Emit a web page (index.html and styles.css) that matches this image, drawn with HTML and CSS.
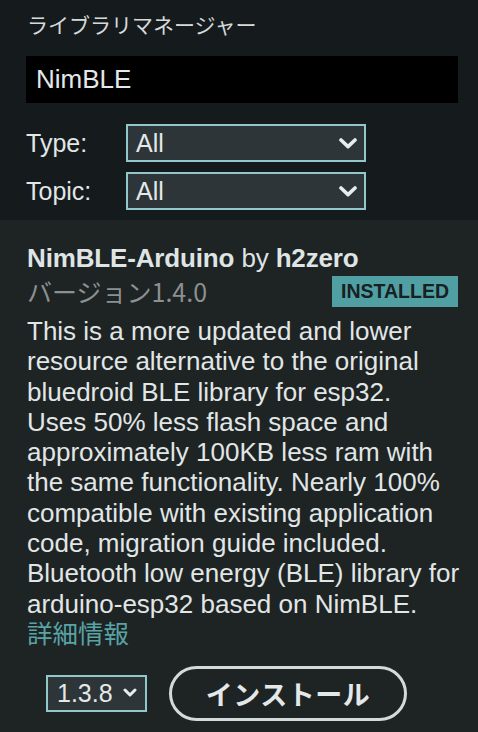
FILE: index.html
```html
<!DOCTYPE html>
<html>
<head>
<meta charset="utf-8">
<link rel="stylesheet" href="styles.css">
</head>
<body>
<div class="top">
  <div class="title">ライブラリマネージャー</div>
  <div class="search">NimBLE</div>
  <div class="filters">
    <div class="frow">
      <span class="flabel">Type:</span>
      <div class="select"><span>All</span><svg class="chev" viewBox="0 0 18 11" width="18" height="11"><path d="M2 2 L9 8.6 L16 2" fill="none" stroke="#e8ecec" stroke-width="3.6" stroke-linecap="round" stroke-linejoin="round"/></svg></div>
    </div>
    <div class="frow">
      <span class="flabel">Topic:</span>
      <div class="select"><span>All</span><svg class="chev" viewBox="0 0 18 11" width="18" height="11"><path d="M2 2 L9 8.6 L16 2" fill="none" stroke="#e8ecec" stroke-width="3.6" stroke-linecap="round" stroke-linejoin="round"/></svg></div>
    </div>
  </div>
</div>
<div class="item">
  <div class="name"><b>NimBLE-Arduino</b> by <b>h2zero</b></div>
  <div class="verrow">
    <span class="ver">バージョン1.4.0</span>
    <span class="badge">INSTALLED</span>
  </div>
  <p class="desc">This is a more updated and lower<br>resource alternative to the original<br>bluedroid BLE library for esp32.<br>Uses 50% less flash space and<br>approximately 100KB less ram with<br>the same functionality. Nearly 100%<br>compatible with existing application<br>code, migration guide included.<br>Bluetooth low energy (BLE) library for<br>arduino-esp32 based on NimBLE.</p>
  <a class="more">詳細情報</a>
  <div class="actions">
    <div class="vsel"><span>1.3.8</span><svg viewBox="0 0 14 10" width="14" height="10"><path d="M2 2 L7 7 L12 2" fill="none" stroke="#e8ecec" stroke-width="3" stroke-linecap="round" stroke-linejoin="round"/></svg></div>
    <button class="install">インストール</button>
  </div>
</div>
</body>
</html>
```
FILE: styles.css
```css
html, body {
  margin: 0;
  padding: 0;
  background: #1e2324;
  font-family: "Liberation Sans", Arial, "Noto Sans CJK JP", sans-serif;
  color: #e1e6e6;
}
.top {
  background: #151a1d;
  height: 220px;
  box-sizing: border-box;
  padding: 8px 20px 0 26px;
}
.title {
  font-family: "Noto Sans CJK JP", sans-serif;
  font-size: 21px;
  color: #d5d9d9;
  height: 32px;
  line-height: 32px;
  padding-left: 1px;
}
.search {
  margin-top: 16px;
  width: 432px;
  height: 47px;
  background: #000;
  box-sizing: border-box;
  padding-left: 10px;
  font-size: 26px;
  line-height: 47px;
  color: #e4e8e8;
}
.filters {
  margin-top: 21px;
  display: flex;
  flex-direction: column;
  gap: 10px;
}
.frow {
  display: flex;
  align-items: center;
}
.flabel {
  width: 100px;
  font-size: 25px;
  color: #e1e6e6;
}
.select {
  width: 240px;
  height: 38px;
  box-sizing: border-box;
  border: 2px solid #92c8ca;
  background: #2e3538;
  display: flex;
  align-items: center;
  justify-content: space-between;
  padding: 0 7px 0 8px;
  font-size: 25px;
  color: #e4e8e8;
}
.item {
  padding: 23px 14px 0 27px;
}
.name {
  font-size: 26px;
  line-height: 30px;
  color: #dfe4e4;
  letter-spacing: -0.15px;
}
.name b { font-weight: bold; }
.verrow {
  display: flex;
  justify-content: space-between;
  align-items: center;
  margin-top: 3px;
  height: 31px;
  padding-right: 6px;
}
.ver {
  font-family: "Noto Sans CJK JP", sans-serif;
  font-size: 25px;
  line-height: 31px;
  color: #8c9090;
}
.badge {
  background: #509fa3;
  color: #172022;
  font-weight: bold;
  font-size: 19.5px;
  height: 31px;
  line-height: 31px;
  box-sizing: border-box;
  padding: 0 9px 0 9px;
}
.desc {
  margin: 9px 0 0;
  font-size: 26px;
  line-height: 30.3px;
  color: #e1e6e6;
  white-space: nowrap;
}
.more {
  display: block;
  font-family: "Liberation Sans", "Noto Sans CJK JP", sans-serif;
  color: #58a3a6;
  font-size: 25.5px;
  line-height: 30px;
}
.actions {
  display: flex;
  align-items: center;
  gap: 22px;
  margin-top: 17px;
  padding-left: 19px;
}
.vsel {
  width: 101px;
  height: 37px;
  box-sizing: border-box;
  border: 2px solid #92c8ca;
  background: #2e3538;
  display: flex;
  align-items: center;
  justify-content: space-between;
  padding: 0 8px 0 9px;
  font-size: 25px;
  color: #e4e8e8;
}
.install {
  width: 238px;
  height: 55px;
  border: 3px solid #d4dada;
  border-radius: 28px;
  background: transparent;
  color: #e4e8e8;
  font-family: "Noto Sans CJK JP", sans-serif;
  font-weight: bold;
  font-size: 27px;
  padding: 0;
  letter-spacing: 0.5px;
}
```
